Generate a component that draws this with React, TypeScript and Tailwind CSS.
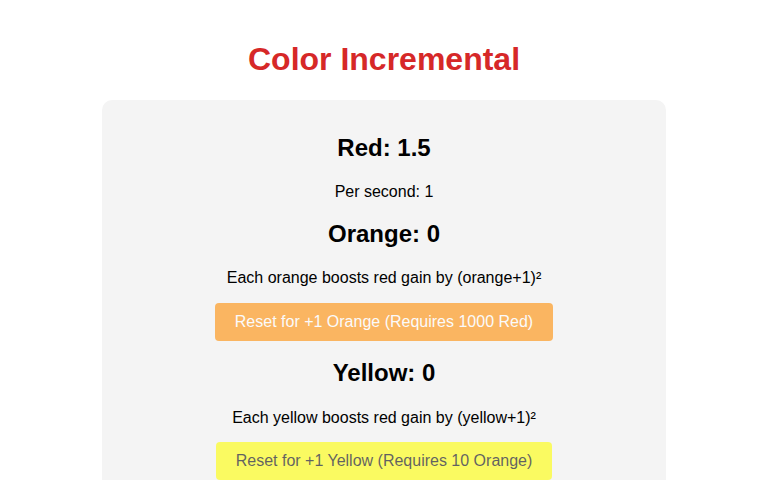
export default function App() {
  const red = 1.5;
  const perSecond = 1;
  const orange = 0;
  const yellow = 0;

  return (
    <div className="min-h-screen bg-white pt-[39px] text-black" style={{ fontFamily: '"Liberation Sans", Arial, sans-serif' }}>
      <h1 className="text-center text-[32px] font-bold leading-[40px] text-[#d62828]">Color Incremental</h1>

      <div className="mx-auto mt-[21px] flex w-[564px] flex-col items-center rounded-[10px] bg-[#f4f4f4] pt-[34px] pb-6">
        <h2 className="text-[24px] font-bold leading-[28px]">Red: {red}</h2>
        <p className="mt-[20px] text-[16px] leading-[20px]">Per second: {perSecond}</p>

        <h2 className="mt-[18px] text-[24px] font-bold leading-[28px]">Orange: {orange}</h2>
        <p className="mt-[20px] text-[16px] leading-[20px]">Each orange boosts red gain by (orange+1)²</p>
        <button
          disabled
          className="mt-[15px] h-[38px] rounded-[4px] bg-[#ff8c00] px-[20px] text-[16px] text-white opacity-60"
        >
          Reset for +1 Orange (Requires 1000 Red)
        </button>

        <h2 className="mt-[18px] text-[24px] font-bold leading-[28px]">Yellow: {yellow}</h2>
        <p className="mt-[21px] text-[16px] leading-[20px]">Each yellow boosts red gain by (yellow+1)²</p>
        <button
          disabled
          className="mt-[14px] h-[38px] rounded-[4px] bg-[#ffff00] px-[20px] text-[16px] text-black opacity-60"
        >
          Reset for +1 Yellow (Requires 10 Orange)
        </button>
      </div>
    </div>
  );
}
